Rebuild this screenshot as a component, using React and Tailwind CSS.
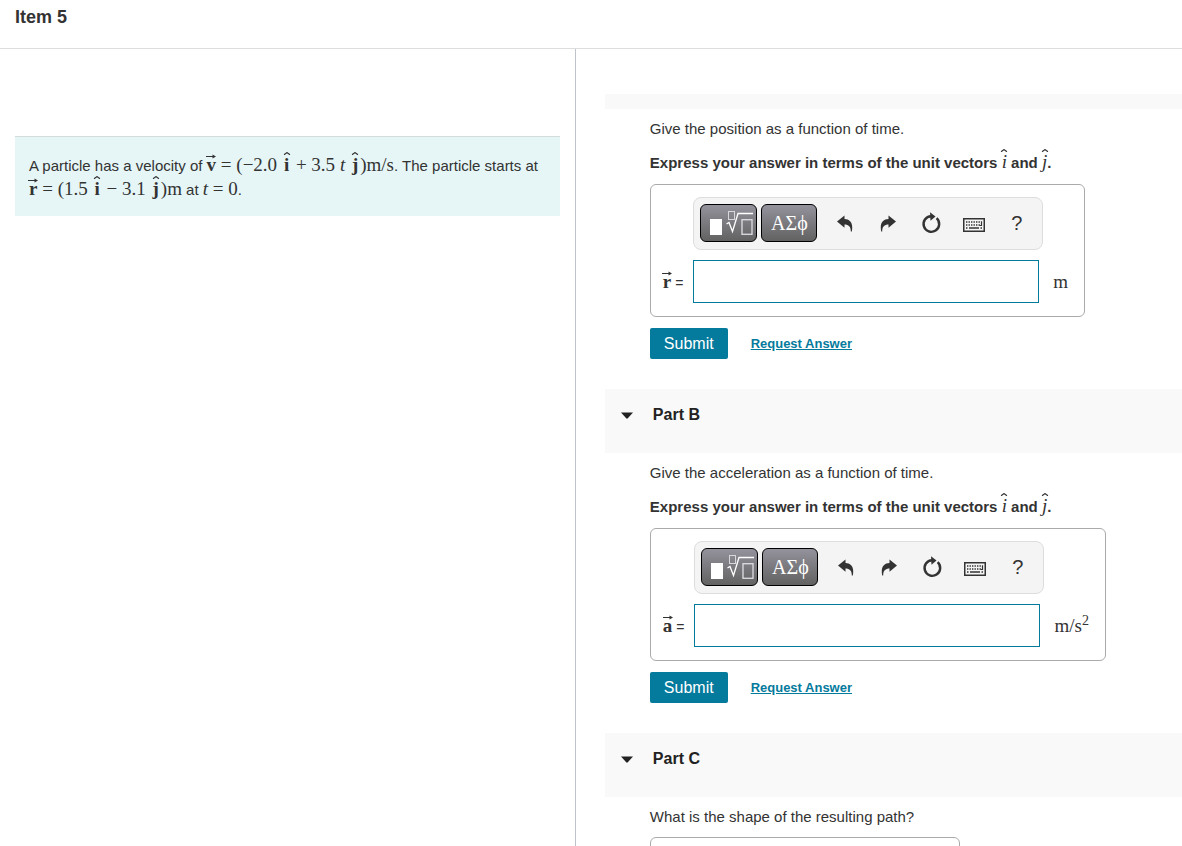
import React, { useState } from 'react';

const parts = [
  {
    id: 'a',
    title: 'Part A',
    prompt: 'Give the position as a function of time.',
    symbol: 'r',
    unit: <>m</>,
  },
  {
    id: 'b',
    title: 'Part B',
    prompt: 'Give the acceleration as a function of time.',
    symbol: 'a',
    unit: (
      <>
        m/s<sup className="text-sm leading-none">2</sup>
      </>
    ),
  },
];

const Math = ({ children }) => (
  <span className="font-['Liberation_Serif',serif] text-[19px] leading-none whitespace-nowrap">{children}</span>
);

// bold letter with an arrow on top
const Vec = ({ children }) => (
  <span className="relative inline-block font-['Liberation_Serif',serif] text-[19px] leading-none font-bold">
    {children}
    <svg viewBox="0 0 10 5" className="absolute left-1/2 -top-px h-[5px] w-[10px] -translate-x-1/2" aria-hidden="true">
      <path d="M0 2.5H8" stroke="currentColor" strokeWidth="1" />
      <path d="M6.5 0.5L10 2.5L6.5 4.5Z" fill="currentColor" />
    </svg>
  </span>
);

// letter with a hat on top
const Hat = ({ children, className = 'mx-0.5 font-bold' }) => (
  <span className={`relative inline-block font-['Liberation_Serif',serif] text-[19px] leading-none ${className}`}>
    {children}
    <svg viewBox="0 0 7 3" className="absolute left-1/2 -top-[3px] h-[3px] w-[7px] -translate-x-1/2" aria-hidden="true">
      <path d="M0.5 2.8L3.5 0.6L6.5 2.8" fill="none" stroke="currentColor" strokeWidth="1.2" />
    </svg>
  </span>
);

const UndoIcon = ({ className = '' }) => (
  <svg viewBox="0 0 16 17" className={`h-[17px] w-4 ${className}`} fill="currentColor">
    <path d="M0 6.5L7.5 0.5V4C13 4.2 16.5 8 14.8 16.5H13.8C13.8 11.5 11.5 9.6 7.5 9.5V12.8Z" />
  </svg>
);

const ResetIcon = () => (
  <svg viewBox="0 0 20 22" className="h-[22px] w-5">
    <path d="M15.6 6.2A7.8 7.8 0 1 1 10 4.2" fill="none" stroke="currentColor" strokeWidth="2.4" />
    <path d="M9 0.3L14.5 4.5L9.5 8.8Z" fill="currentColor" />
  </svg>
);

const KeyboardIcon = () => (
  <svg viewBox="0 0 22 14" className="mt-1 h-3.5 w-[22px]" fill="none" stroke="currentColor">
    <rect x="0.75" y="0.75" width="20.5" height="12.5" strokeWidth="1.5" />
    <path d="M3 4H17" strokeWidth="1.4" strokeDasharray="1.4 1.1" />
    <path d="M3 7H17" strokeWidth="1.4" strokeDasharray="1.4 1.1" />
    <path d="M18.5 3.2V7.5H16.5" strokeWidth="1.2" />
    <path d="M3 10H4.5M6 10H16M17.5 10H19" strokeWidth="1.5" />
  </svg>
);

const TemplateIcon = () => (
  <svg viewBox="0 0 44 26" className="ml-1 mt-0.5 h-[26px] w-11" fill="none" stroke="white">
    <rect x="1" y="8" width="12" height="16" fill="white" stroke="none" />
    <rect x="19.5" y="0.5" width="6" height="8" stroke="#d8d8dc" />
    <path d="M17.5 13L20 11.5L23.5 20.5L29 2.5H44" strokeWidth="1.3" />
    <rect x="33" y="8.7" width="10" height="14.6" stroke="#d8d8dc" strokeWidth="1.4" />
  </svg>
);

const Toolbar = () => {
  const dark =
    'flex h-[38px] items-center justify-center rounded-md border border-black bg-linear-to-b from-[#94929c] to-[#626262] text-white';
  const plain = 'flex h-[38px] w-[43px] items-center justify-center text-[#333]';

  return (
    <div className="flex rounded-lg border border-[#ddd] bg-[#f4f4f4] pb-[7px] pl-1.5 pr-1 pt-1.5">
      <button type="button" aria-label="Templates" className={`${dark} w-[57px]`}>
        <TemplateIcon />
      </button>
      <button
        type="button"
        className={`${dark} ml-1 mr-1.5 w-14 font-['Liberation_Serif',serif] text-xl`}
      >
        ΑΣϕ
      </button>
      <button type="button" aria-label="Undo" className={plain}>
        <UndoIcon />
      </button>
      <button type="button" aria-label="Redo" className={plain}>
        <UndoIcon className="-scale-x-100" />
      </button>
      <button type="button" aria-label="Reset" className={plain}>
        <ResetIcon />
      </button>
      <button type="button" aria-label="Keyboard shortcuts" className={plain}>
        <KeyboardIcon />
      </button>
      <button type="button" aria-label="Help" className={`${plain} text-xl`}>
        ?
      </button>
    </div>
  );
};

const PartHeader = ({ title }) => (
  <h2 className="h-16 bg-[#f9f9f9] pt-3.5">
    <button type="button" className="flex items-center pl-4 text-base font-bold leading-6 text-[#222]">
      <svg viewBox="0 0 12 7" className="mr-5 h-[7px] w-3" fill="currentColor">
        <path d="M0 0.5H12L6.8 6.3Q6 7 5.2 6.3Z" />
      </svg>
      {title}
    </button>
  </h2>
);

const AnswerPart = ({ part }) => {
  const [answer, setAnswer] = useState('');
  const inputId = `answer-${part.id}`;

  return (
    <form className="pb-[30px] pl-[45px] pt-2" onSubmit={(e) => e.preventDefault()}>
      <p className="leading-6">{part.prompt}</p>
      <p className="mt-2.5 font-bold leading-6">
        Express your answer in terms of the unit vectors{' '}
        <Hat className="font-normal italic">i</Hat> and{' '}
        <Hat className="font-normal italic">j</Hat>.
      </p>

      <div className="mt-[9px] inline-grid grid-cols-[auto_auto_auto] items-center gap-y-2.5 rounded-md border border-[#aaa] py-3 pl-3 pr-4 align-top">
        <div className="col-start-2">
          <Toolbar />
        </div>
        <label htmlFor={inputId} className="col-start-1 pr-2.5 text-sm">
          <Vec>{part.symbol}</Vec> =
        </label>
        <input
          id={inputId}
          type="text"
          value={answer}
          onChange={(e) => setAnswer(e.target.value)}
          className="mb-px mr-1 h-[43px] border border-[#047a9c] bg-white px-2 outline-none"
        />
        <span className="pl-2.5 font-['Liberation_Serif',serif] text-[19px] leading-6">{part.unit}</span>
      </div>

      <div className="mt-[11px] flex items-center">
        <button
          type="submit"
          className="h-[31px] rounded-xs bg-[#047a9c] px-3.5 text-base leading-none text-white"
        >
          Submit
        </button>
        <a href="#request" className="ml-[23px] text-[13px] font-bold text-[#047a9c] underline">
          Request Answer
        </a>
      </div>
    </form>
  );
};

export default function App() {
  return (
    <div className="flex h-screen flex-col bg-white font-['Liberation_Sans',Arial,sans-serif] text-[15px] text-[#333]">
      <header className="border-b border-[#ddd] px-[15px] pb-[18px] pt-1">
        <h1 className="text-lg font-bold leading-[26px]">Item 5</h1>
      </header>

      <main className="grid min-h-0 flex-1 grid-cols-[19fr_20fr]">
        <section className="border-r border-[#bfc4cc] px-[15px] pt-[87px]">
          <div className="border-t border-[#d5dcdc] bg-[#e6f6f7] px-3.5 pb-3.5 pt-[17px] leading-6">
            A particle has a velocity of{' '}
            <Math>
              <Vec>v</Vec> = (−2.0 <Hat>i</Hat> + 3.5 <i>t</i> <Hat>j</Hat>)m/s
            </Math>
            . The particle starts at{' '}
            <Math>
              <Vec>r</Vec> = (1.5 <Hat>i</Hat> − 3.1 <Hat>j</Hat>)m
            </Math>{' '}
            at{' '}
            <Math>
              <i>t</i> = 0
            </Math>
            .
          </div>
        </section>

        <section className="overflow-y-auto pl-[29px] pt-[45px] [scrollbar-width:none]">
          <div className="h-[15px] bg-[#f9f9f9]" />
          <AnswerPart part={parts[0]} />
          <PartHeader title={parts[1].title} />
          <AnswerPart part={parts[1]} />
          <PartHeader title="Part C" />
          <div className="pb-10 pl-[45px] pt-2">
            <p className="leading-6">What is the shape of the resulting path?</p>
            <div className="mt-2 h-24 w-[310px] rounded-md border border-[#aaa]" />
          </div>
        </section>
      </main>
    </div>
  );
}
